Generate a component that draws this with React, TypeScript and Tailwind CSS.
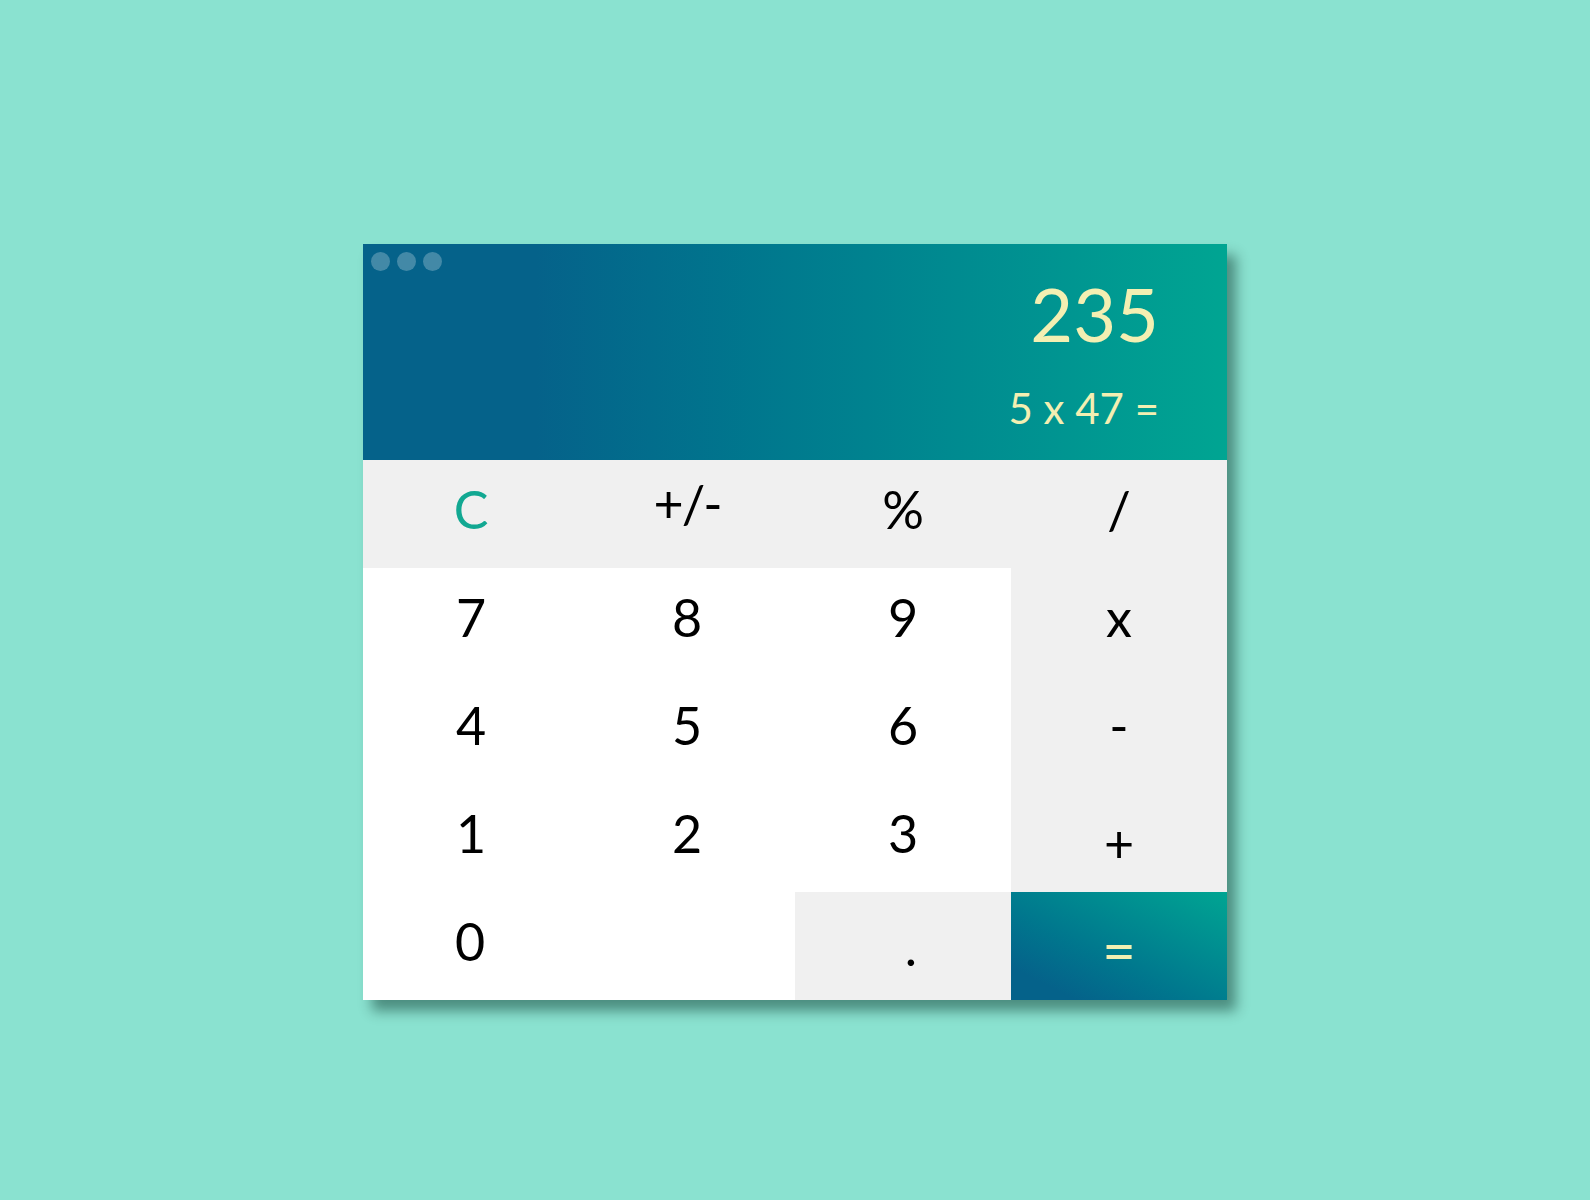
import React from 'react';

type Key = {
  label: string;
  tone: 'light' | 'gray' | 'accent' | 'equals';
  span?: number;
  nudge?: string;
};

const keys: Key[] = [
  { label: 'C', tone: 'accent' },
  { label: '+/-', tone: 'gray', nudge: 'pb-[22px] tracking-[-2px] text-[48px]' },
  { label: '%', tone: 'gray' },
  { label: '/', tone: 'gray' },
  { label: '7', tone: 'light' },
  { label: '8', tone: 'light' },
  { label: '9', tone: 'light' },
  { label: 'x', tone: 'gray' },
  { label: '4', tone: 'light' },
  { label: '5', tone: 'light' },
  { label: '6', tone: 'light' },
  { label: '-', tone: 'gray' },
  { label: '1', tone: 'light' },
  { label: '2', tone: 'light' },
  { label: '3', tone: 'light' },
  { label: '+', tone: 'gray', nudge: 'pt-[10px]' },
  { label: '0', tone: 'light', span: 2 },
  { label: '.', tone: 'gray', nudge: 'pl-[16px]' },
  { label: '=', tone: 'equals', nudge: 'pt-[8px] text-[58px]' },
];

const toneClass: Record<Key['tone'], string> = {
  light: 'bg-white text-black',
  gray: 'bg-[#f0f0f0] text-black',
  accent: 'bg-[#f0f0f0] text-[#12a892]',
  equals: 'bg-gradient-to-tr from-[#05628a] from-15% to-[#00a592] text-[#f3efb2]',
};

function KeyButton({ k }: { k: Key }) {
  return (
    <button
      className={`flex h-[108px] items-center justify-center text-[52px] leading-none ${toneClass[k.tone]} ${
        k.nudge ?? 'pb-[10px]'
      } ${k.span === 2 ? 'col-span-2 justify-start pl-[92px]' : ''}`}
    >
      {k.label}
    </button>
  );
}

export default function App() {
  return (
    <div
      className="flex min-h-[1200px] w-full justify-center bg-[#8ae2d0] pt-[244px]"
      style={{ fontFamily: 'Lato, "Noto Sans", sans-serif' }}
    >
      <div className="h-[756px] w-[864px] shadow-[9px_11px_12px_rgba(0,40,30,0.45)]">
        <div className="flex h-[216px] flex-col bg-gradient-to-r from-[#05628a] from-20% to-[#00a592] px-[8px] pt-[8px]">
          <div className="flex gap-[7px]">
            <span className="h-[19px] w-[19px] rounded-full bg-white/25" />
            <span className="h-[19px] w-[19px] rounded-full bg-white/25" />
            <span className="h-[19px] w-[19px] rounded-full bg-white/25" />
          </div>
          <div className="flex flex-col items-end pr-[60px] text-[#f3efb2]">
            <div className="mt-[3px] text-[74px] leading-[80px]">235</div>
            <div className="mt-[19px] text-[42px] leading-[70px]">5 x 47 =</div>
          </div>
        </div>
        <div className="grid grid-cols-4">
          {keys.map((k) => (
            <KeyButton key={k.label} k={k} />
          ))}
        </div>
      </div>
    </div>
  );
}
